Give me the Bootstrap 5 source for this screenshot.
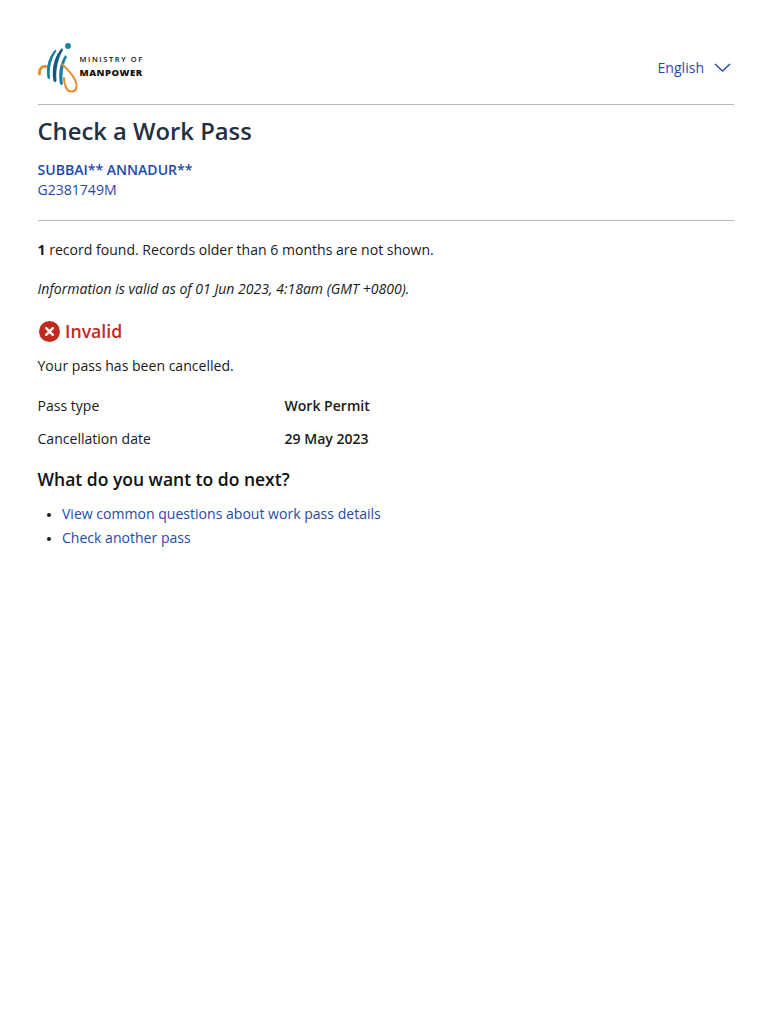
<!DOCTYPE html>
<html lang="en">
<head>
  <meta charset="UTF-8">
  <title>Check a Work Pass</title>
  <link href="https://cdn.jsdelivr.net/npm/bootstrap@5.3.3/dist/css/bootstrap.min.css" rel="stylesheet">
  <style>
    body {
      font-family: "Open Sans", sans-serif;
      font-size: 14.050px;
      color: #1a1a1a;
      background: #fff;
    }
    a { color: #1f4aa8; text-decoration: none; }
    .page-wrap { padding: 44px 34px 0 37.500px; }
    .top-bar { height: 61px; border-bottom: 1px solid #b8b8b8; }
    .logo-wrap { margin-bottom: 12px; }
    .logo-text { line-height: 11px; color: #111; margin-left: 1px; margin-bottom: 4px; }
    .logo-text span { display: block; letter-spacing: 1.600px; font-weight: 600; font-size: 7.500px; }
    .logo-text b { font-size: 9.500px; letter-spacing: .5px; font-weight: 800; }
    .lang-link { margin-right: 3px; margin-top: -13px; gap: 10px; }
    .page-title { font-size: 23.800px; font-weight: 600; color: #24303f; margin: 10px 0 0; line-height: 32px; }
    .person { margin-top: 13px; line-height: 20px; padding-bottom: 20px; border-bottom: 1px solid #b8b8b8; color: #1f4aa8; }
    .person strong { font-weight: 600; display: block; }
    .found { margin: 19px 0 0; line-height: 20px; }
    .found b { font-weight: 700; }
    .valid-note { margin: 19px 0 0; line-height: 20px; font-style: italic; }
    .status { margin-top: 19px; color: #c22a1e; font-size: 17.700px; font-weight: 600; line-height: 26px; gap: 5px; }
    .status svg { margin-left: 1.500px; }
    .pass-note { margin: 12px 0 0; line-height: 20px; }
    .detail-rows { margin-top: 20px; gap: 13px; }
    .detail-row { line-height: 20px; }
    .detail-label { width: 247px; }
    .detail-value { font-weight: 600; }
    .next-title { font-size: 17.500px; font-weight: 600; margin: 17px 0 0; line-height: 26px; color: #111; }
    .next-list { margin: 10px 0 0; padding-left: 24.500px; }
    .next-list li { line-height: 24px; }
    .next-list li::marker { font-size: 11px; }
  </style>
</head>
<body>
  <div class="page-wrap">
    <div class="top-bar d-flex justify-content-between align-items-center">
      <div class="logo-wrap d-flex align-items-center">
        <svg width="41" height="50" viewBox="0 0 41 50" fill="none">
          <path d="M1.500 31C1 26 4 22.500 8.500 23.500" stroke="#e8892b" stroke-width="2.800" stroke-linecap="round"/>
          <path d="M17.500 6.500C11 13 7.500 23 9.500 35C11 37 12 36 12 34C11 25 13.500 15 18.500 8Z" fill="#1b7f9f"/>
          <path d="M24 5C17 12 13 25 15.500 38C17 40 18.500 39 18.500 37C17.500 27 20 15 25 7Z" fill="#17567f"/>
          <path d="M27.500 12C22 19 20 30 22 41C23.500 43 25 42 24.800 40C24 31 25 21 29 14Z" fill="#1b7f9f"/>
          <path d="M24 21C30 27 39.500 36 38.500 44C37.500 50 30.500 50 28 44.500C26.500 41 26 38 26 35" stroke="#e8892b" stroke-width="1.900" stroke-linecap="round"/>
          <circle cx="30" cy="3" r="2.900" fill="#1b7f9f"/>
        </svg>
        <div class="logo-text"><span>MINISTRY OF</span><b>MANPOWER</b></div>
      </div>
      <a href="#" class="lang-link d-flex align-items-center">English
        <svg width="17" height="9" viewBox="0 0 17 9" fill="none"><path d="M1 1l7.500 7L16 1" stroke="#1f4aa8" stroke-width="1.400"/></svg>
      </a>
    </div>
    <h1 class="page-title">Check a Work Pass</h1>
    <div class="person">
      <strong>SUBBAI** ANNADUR**</strong>
      G2381749M
    </div>
    <p class="found"><b>1</b> record found. Records older than 6 months are not shown.</p>
    <p class="valid-note">Information is valid as of 01 Jun 2023, 4:18am (GMT +0800).</p>
    <div class="status d-flex align-items-center">
      <svg width="21" height="21" viewBox="0 0 22 22"><circle cx="11" cy="11" r="11" fill="#c22a1e"/><path d="M7.500 7.500l7 7M14.500 7.500l-7 7" stroke="#fff" stroke-width="2.400" stroke-linecap="round"/></svg>
      Invalid
    </div>
    <p class="pass-note">Your pass has been cancelled.</p>
    <div class="detail-rows d-flex flex-column">
      <div class="detail-row d-flex"><div class="detail-label">Pass type</div><div class="detail-value">Work Permit</div></div>
      <div class="detail-row d-flex"><div class="detail-label">Cancellation date</div><div class="detail-value">29 May 2023</div></div>
    </div>
    <h2 class="next-title">What do you want to do next?</h2>
    <ul class="next-list">
      <li><a href="#">View common questions about work pass details</a></li>
      <li><a href="#">Check another pass</a></li>
    </ul>
  </div>
  <script src="https://cdn.jsdelivr.net/npm/bootstrap@5.3.3/dist/js/bootstrap.bundle.min.js"></script>
</body>
</html>
